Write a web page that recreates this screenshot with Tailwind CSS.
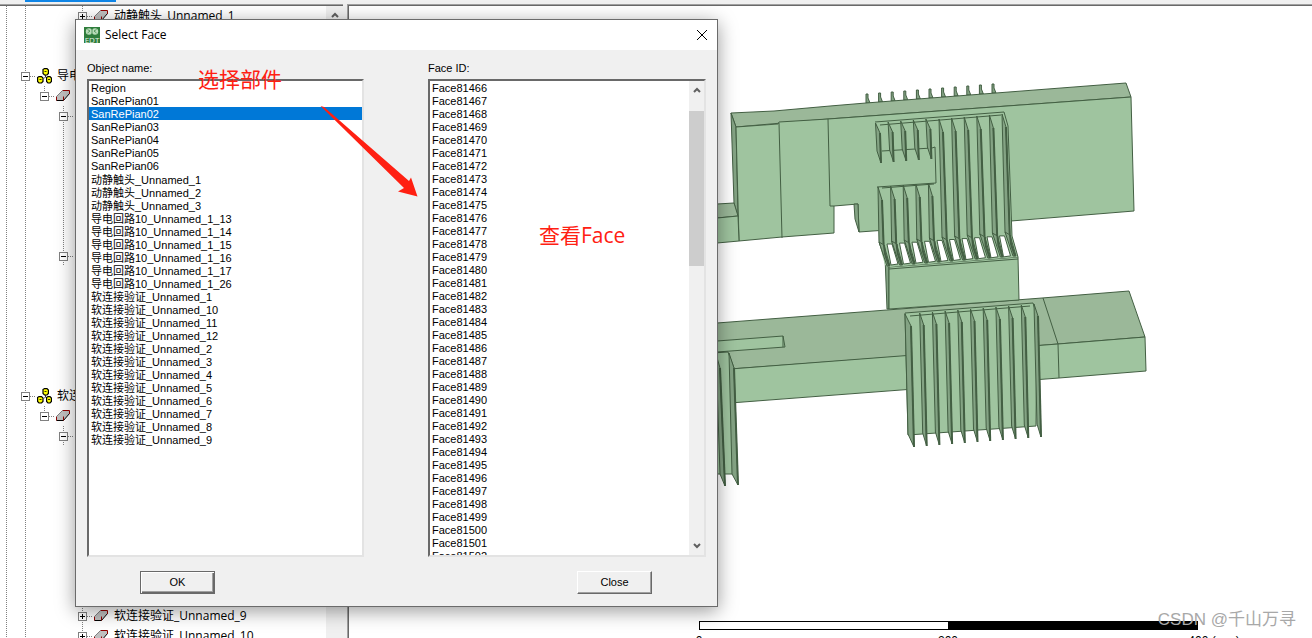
<!DOCTYPE html>
<html lang="zh-CN">
<head>
    <meta charset="UTF-8">
    <meta name="viewport" content="width=device-width, initial-scale=1.0">
    <title>Select Face</title>
    <script src="https://cdn.jsdelivr.net/npm/@tailwindcss/browser@4"></script>
</head>
<body class="relative flex h-screen flex-col overflow-hidden bg-[#f0f0f0] font-['Open_Sans','Noto_Sans_CJK_SC',sans-serif] text-xs text-black">

    <!-- Shared symbols -->
    <svg class="hidden">
        <symbol id="icon-parts" viewBox="0 0 16 16">
            <g fill="#ff0" stroke="#000" stroke-width="1.2">
                <path d="M7 1.500 8.500 .6H11L12.400 2V5.500L11 7H8.500L7 5.500z"/>
                <path d="M1.600 9.500 3 8.600H5.500L7 10V13.500L5.500 15H3L1.600 13.500z"/>
                <path d="M10.600 9.500 12 8.600H14L15.400 10V13.500L14 15H12L10.600 13.500z"/>
            </g>
            <path d="M8.500 3.500h2M3.500 11.500h2M12 11.500h2M9.500 7v2L8 10.500" stroke="#000" stroke-width=".8" fill="none"/>
        </symbol>
        <symbol id="icon-solid" viewBox="0 0 16 16">
            <path d="M1.500 8.500 7.500 2.500H14.500V5.500L8.500 12.500H1.500z" fill="#c0c0c0"/>
            <path d="M1.500 12.500H8.500L14.500 5.500" fill="none" stroke="#000"/>
            <path d="M1.500 12.500V8.500M7.500 2.500H14.500V6M8.500 12.500V8.500" fill="none" stroke="#900000"/>
            <path d="M1.500 8.500 7.500 2.500" fill="none" stroke="#808080"/>
        </symbol>
        <symbol id="icon-up" viewBox="0 0 8 6">
            <path d="M1 5 4 2 7 5" fill="none" stroke="#606060" stroke-width="2"/>
        </symbol>
        <symbol id="icon-down" viewBox="0 0 8 6">
            <path d="M1 1 4 4 7 1" fill="none" stroke="#606060" stroke-width="2"/>
        </symbol>
    </svg>

    <!-- Toolbar edge -->
    <div class="flex h-1 shrink-0 pl-[25px]">
        <div class="h-0.5 w-[91px] bg-[#0f85e6]"></div>
    </div>

    <main class="flex min-h-0 flex-1">
        <!-- Model tree -->
        <nav class="flex w-[343px] shrink-0 border-t border-[#a0a0a0]">
            <div class="flex min-w-0 flex-1 border-t border-[#696969] bg-white">
                <ul id="tree" class="min-w-0 flex-1 overflow-hidden"></ul>
                <div class="flex w-[17px] justify-center bg-[#f0f0f0] pt-1.5">
                    <svg class="h-1.5 w-2"><use href="#icon-up"/></svg>
                </div>
            </div>
        </nav>

        <!-- 3D view -->
        <section class="ml-1 min-w-0 flex-1 border-t border-l border-[#a0a0a0]">
            <div class="h-full border-t border-l border-[#696969] bg-white">
                <svg class="h-full w-full" role="img" aria-label="3D model">
                    <g id="model" transform="translate(-349 -6)" stroke="#435f43" stroke-width="1" stroke-linejoin="round"></g>
                    <g transform="translate(-349 -6)">
                        <rect x="699.5" y="621.5" width="498" height="8" fill="#fff" stroke="#000"/>
                        <rect x="948" y="621" width="250" height="9"/>
                        <g class="font-['Liberation_Sans',sans-serif] text-xs" text-anchor="middle">
                            <text x="699" y="645">0</text>
                            <text x="948" y="645">200</text>
                            <text x="1214" y="645">400 (mm)</text>
                        </g>
                    </g>
                </svg>
            </div>
        </section>
    </main>

    <!-- Select Face dialog -->
    <div role="dialog" aria-labelledby="dialogTitle" class="absolute top-[19px] left-[75px] flex h-[588px] w-[643px] flex-col border border-[#6b6b6b] bg-[#f0f0f0] shadow-[0_4px_18px_rgba(0,0,0,0.4)]">
        <header class="flex h-[30px] shrink-0 items-center bg-white pr-[7px] pl-2">
            <svg class="h-4 w-4" viewBox="0 0 16 16">
                <rect width="16" height="16" fill="#2f7d3c"/>
                <g fill="#b9dcb9">
                    <circle cx="5" cy="4.500" r="3.200"/>
                    <circle cx="11" cy="4.500" r="3.200"/>
                </g>
                <path d="M3.500 2.500 6 4 3.500 6M12.500 2.500 10 4 12.500 6M8 1v7" stroke="#2f7d3c" stroke-width=".7" fill="none"/>
                <text x="8" y="15.500" text-anchor="middle" font-size="8" fill="#e4f3e4">EDT</text>
            </svg>
            <h1 id="dialogTitle" class="ml-[5px] flex-1">Select Face</h1>
            <button type="button" aria-label="Close window" class="p-0.5">
                <svg class="h-3 w-3" viewBox="0 0 12 12"><path d="M1 1 11 11M11 1 1 11" stroke="#000" fill="none"/></svg>
            </button>
        </header>

        <form class="flex min-h-0 flex-1 flex-col px-[11px] pt-[10px] pb-3 font-['Liberation_Sans','Noto_Sans_CJK_SC',sans-serif] text-[11px]">
            <div class="flex min-h-0 flex-1 justify-between">
                <div class="flex w-[277px] flex-col">
                    <label for="objectName" class="h-[19px] leading-4">Object name:</label>
                    <select id="objectName" size="36" class="min-h-0 w-full flex-1 overflow-hidden border-2 border-t-[#696969] border-r-[#e3e3e3] border-b-[#e3e3e3] border-l-[#696969] bg-white [scrollbar-width:none]"></select>
                </div>
                <div class="flex w-[278px] flex-col">
                    <label for="faceId" class="h-[19px] leading-4">Face ID:</label>
                    <div class="flex min-h-0 flex-1 border-2 border-t-[#696969] border-r-[#e3e3e3] border-b-[#e3e3e3] border-l-[#696969] bg-white">
                        <select id="faceId" size="36" class="h-full min-w-0 flex-1 bg-white [scrollbar-width:none]"></select>
                        <div class="flex w-[15px] flex-col items-center bg-[#f0f0f0] py-1.5">
                            <svg class="h-1.5 w-2"><use href="#icon-up"/></svg>
                            <div class="mt-[18px] h-[155px] w-full bg-[#cdcdcd]"></div>
                            <svg class="mt-auto h-1.5 w-2"><use href="#icon-down"/></svg>
                        </div>
                    </div>
                </div>
            </div>
            <div class="mt-[14px] flex justify-between pr-[54px] pl-[53px]">
                <button type="button" class="h-[23px] w-[75px] border border-[#696969] shadow-[inset_1px_1px_#fff,inset_-1px_-1px_#696969,inset_-2px_-2px_#a0a0a0]">OK</button>
                <button type="button" class="h-[23px] w-[75px] border border-t-white border-r-[#696969] border-b-[#696969] border-l-white shadow-[inset_-1px_-1px_#a0a0a0]">Close</button>
            </div>
        </form>
    </div>

    <!-- Notes on top of the window -->
    <div class="pointer-events-none absolute inset-0 text-[21px] leading-7 text-[#ff2012]">
        <svg class="absolute h-full w-full">
            <path d="M320.500 106 324 107 409 181 411 177.500 417.500 196.500 398 191.500 404 188z" fill="#ff2012"/>
        </svg>
        <p class="absolute top-[65px] left-[198px]">选择部件</p>
        <p class="absolute top-[221px] left-[539px]">查看Face</p>
    </div>
    <p class="pointer-events-none absolute right-4 bottom-1.5 font-['Liberation_Sans','Noto_Sans_CJK_SC',sans-serif] text-[17px] leading-6 text-[#a8a8a8]">CSDN @千山万寻</p>

    <script>
        // Tree rows by line number, the other lines are empty
        const rows = {
            0: {level: 4, icon: 'solid', open: false, text: '动静触头_Unnamed_1'},
            3: {level: 1, icon: 'parts', open: true, text: '导电回路'},
            4: {level: 2, icon: 'solid', open: true, text: ''},
            5: {level: 3, icon: 'solid', open: true, text: ''},
            12: {level: 3, icon: 'solid', open: true, text: ''},
            19: {level: 1, icon: 'parts', open: true, text: '软连接验证'},
            20: {level: 2, icon: 'solid', open: true, text: ''},
            21: {level: 3, icon: 'solid', open: true, text: ''},
            30: {level: 4, icon: 'solid', open: false, text: '软连接验证_Unnamed_9'},
            31: {level: 4, icon: 'solid', open: false, text: '软连接验证_Unnamed_10'}
        };

        function guide(on) {
            return `<span class="flex w-[19px] shrink-0 justify-center">${on ? '<i class="w-px bg-[repeating-linear-gradient(#808080_0_1px,transparent_1px_2px)]"></i>' : ''}</span>`;
        }

        let html = '';
        for (let i = 0; i < 32; i++) {
            const row = rows[i];
            html += '<li class="flex h-5 pl-4"><span class="-ml-[19px] flex">' + guide(true) + '</span>';
            if (!row) {
                html += guide(true) + guide(false) + guide(i > 5 && i < 12);
            } else {
                for (let l = 1; l < row.level; l++) html += guide(l === 1);
                html += `
                    <button type="button" class="flex w-[19px] shrink-0 items-center justify-center" aria-label="Toggle">
                        <svg class="h-5 w-[19px]" viewBox="0 0 19 20">
                            <path d="${row.level === 2 ? 'M9.500 0v6' : 'M9.500 0v20'}M14 10.500h5" stroke="#808080" stroke-dasharray="1 1"/>
                            <rect x="5.500" y="6.500" width="8" height="8" fill="#fff" stroke="#808080"/>
                            <path d="M7 10.500h5${row.open ? '' : 'M9.500 8v5'}" stroke="#000"/>
                        </svg>
                    </button>
                    <svg class="mt-0.5 ml-px h-4 w-4 shrink-0"><use href="#icon-${row.icon}"/></svg>
                    <span class="ml-[5px] leading-5 whitespace-nowrap">${row.text}</span>`;
            }
            html += '</li>';
        }
        document.getElementById('tree').innerHTML = html;

        const objects = ['Region'];
        for (let i = 1; i <= 6; i++) objects.push('SanRePian0' + i);
        for (let i = 1; i <= 3; i++) objects.push('动静触头_Unnamed_' + i);
        [13, 14, 15, 16, 17, 26].forEach(n => objects.push('导电回路10_Unnamed_1_' + n));
        [1, 10, 11, 12, 2, 3, 4, 5, 6, 7, 8, 9].forEach(n => objects.push('软连接验证_Unnamed_' + n));

        const optionClass = 'flex h-[13px] min-h-[13px] items-center overflow-visible px-0.5 py-0 leading-[13px]';
        document.getElementById('objectName').innerHTML = objects.map(name =>
            name === 'SanRePian02'
                ? `<option selected class="${optionClass} bg-[linear-gradient(#0078d7,#0078d7)] [-webkit-text-fill-color:#fff]">${name}</option>`
                : `<option class="${optionClass}">${name}</option>`
        ).join('');

        let faces = '';
        for (let id = 81466; id <= 81620; id++) faces += `<option class="${optionClass}">Face${id}</option>`;
        document.getElementById('faceId').innerHTML = faces;

        // Model drawing
        const FRONT = '#9fc49f', TOP = '#9bb899', SIDE = '#84a384', EDGE = '#435f43';
        const shapes = [];
        const poly = (points, fill, stroke = EDGE) => shapes.push(`<polygon points="${points}" fill="${fill}" stroke="${stroke}"/>`);
        const line = (points, width = 1) => shapes.push(`<polyline points="${points}" fill="none" stroke-width="${width}"/>`);
        const pts = (list, dx, dy) => list.map(([x, y]) => (x + dx).toFixed(1) + ',' + (y + dy).toFixed(1)).join(' ');

        // one fin: shaded side face with a heavy right edge
        function fin(list, dx, dy) {
            poly(pts(list, dx, dy), SIDE);
            line(pts([list[1], list[2]], dx, dy), 2);
        }

        // upper bar
        for (let i = 0; i < 11; i++) {
            poly(pts([[866, 94], [868, 94], [868, 98], [870, 103], [866, 103]], i * 12.6, -i), SIDE);
        }
        poly('731,113 774,111 830,106 866,103 996,93 1126,83 1131,97 828,119 736,127', TOP);
        poly('731,113 736,127 738,217 734,203', SIDE);
        poly('736,127 778,124 779,122 828,119 1131,97 1134,211 1011,221 859,232 858,204 834,206 834,233 782,237 739,241', FRONT);
        line('779,123 782,238');
        line('828,119 830,206 834,206');
        poly('854,204 858,204 859,232 855,219', SIDE);
        poly('717,204 734,203 738,216 717,218', TOP);
        poly('717,218 738,216 739,241 717,243', FRONT);

        // lower bar
        poly('717,323 887,310 1042,298 1129,291 1145,337 1058,344 908,356 717,370', TOP);
        poly('717,370 1058,344 1145,337 1146,371 1059,378 717,404', FRONT);
        line('1043,298 1058,344 1059,378');
        poly('717,341 783,336 785,347 717,352', FRONT);
        line('783,336 783,347');

        // block between the bars
        poly('885,256 889,267 889,309 887,309', SIDE);
        poly('889,267 1018,257 1019,300 889,309', FRONT);

        // upper heat sink
        poly('875,122 1004,112 1008,126 1012,236 1018,257 889,267 885,265 879,243 877,187 936,182 935,147 876,151', FRONT, 'none');
        line('875,122 1004,112 1008,126 1012,236 1018,257');
        line('880,125 1001,115');
        line('882,151 932,148 935,147 936,183 877,187');
        line('882,188 934,184');
        line('889,269 1018,259');
        for (let i = 0; i < 11; i++) {
            if (i < 5) {
                fin([[875.5, 123], [880, 133], [881, 163], [877, 151]], i * 12.6, -i);
                fin([[878, 187], [882, 200], [884, 256], [879, 242]], i * 12.6, -i);
            } else {
                fin([[876, 124], [880, 137], [884, 252], [879, 242]], i * 12.6, -i);
            }
            poly(pts([[879, 242], [884, 245], [890, 266], [887, 266]], i * 12.6, -i), SIDE);
            line(pts([[884, 245], [885, 254], [889, 266]], i * 12.6, -i), 2);
        }
        for (let i = 0; i < 10; i++) {
            poly(pts([[887, 244], [892, 244], [898, 264], [891, 265]], i * 12.5, -i * 0.9), '#fff');
        }

        // lower heat sinks
        poly('905,313 1033,303 1037,316 1036,426 908,435', FRONT);
        line('910,316 1030,306');
        for (let i = 0; i < 11; i++) {
            fin([[i ? 907 : 905, 314], [911, 326], [914, 447], [i ? 910 : 908, 434]], i * 12.7, -i);
        }
        poly('712,353 728,352 734,368 733,474 712,474', FRONT);
        fin([[716, 354], [720, 368], [725, 486], [720, 474]], 0, 0);
        fin([[729, 353], [734, 368], [738, 485], [732, 474]], 0, 0);

        document.getElementById('model').innerHTML = shapes.join('');
    </script>

</body>
</html>
